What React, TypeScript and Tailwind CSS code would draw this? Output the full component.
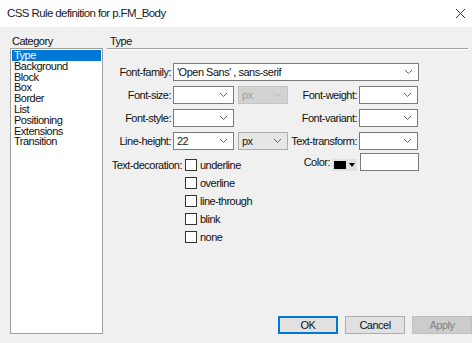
import React from "react";

const font = "font-['Liberation_Sans',Arial,sans-serif]";

function Chevron({ muted }: { muted?: boolean }) {
  return (
    <svg width="9" height="6" viewBox="0 0 9 6" className="shrink-0">
      <path d="M1 1 L4.5 4.5 L8 1" fill="none" stroke={muted ? "#b8b8b8" : "#606060"} strokeWidth="1" />
    </svg>
  );
}

function Select({ w, value, kind = "white" }: { w: string; value?: string; kind?: "white" | "gray" | "disabled" }) {
  const box =
    kind === "disabled"
      ? "bg-[#d2d2d2] border-[#c4c4c4] text-[#a0a0a0]"
      : kind === "gray"
        ? "bg-[#e6e6e6] border-[#adadad] text-[#1a1a1a]"
        : "bg-white border-[#7a7a7a] text-[#1a1a1a]";
  return (
    <div className={`${w} h-[18px] border ${box} flex items-center justify-between pl-[3px] pr-[5px] shrink-0`}>
      <span className="leading-none">{value}</span>
      <Chevron muted={kind === "disabled"} />
    </div>
  );
}

function Check({ label }: { label: string }) {
  return (
    <div className="flex items-center gap-[3px] h-[18px]">
      <div className="w-[12px] h-[12px] border border-[#333333] bg-white" />
      <span className="leading-none">{label}</span>
    </div>
  );
}

export default function App() {
  const cats = ["Type", "Background", "Block", "Box", "Border", "List", "Positioning", "Extensions", "Transition"];

  return (
    <div className={`w-[474px] h-[343px] bg-white overflow-hidden flex flex-col text-[11px] tracking-[-0.5px] text-[#111111] ${font}`}>
      {/* title bar */}
      <div className="h-[27px] flex items-center justify-between pl-[7px] pr-[8px] shrink-0">
        <span className="text-[11.5px] tracking-[-0.6px] text-[#1a1a1a]">CSS Rule definition for p.FM_Body</span>
        <svg width="11" height="11" viewBox="0 0 11 11">
          <path d="M1 1 L10 10 M10 1 L1 10" stroke="#333" strokeWidth="1" />
        </svg>
      </div>

      {/* body */}
      <div className="flex-1 w-[472px] bg-[#f0f0f0] flex pt-[7px] pb-[9px]">
        {/* category column */}
        <div className="w-[104px] pl-[10px] flex flex-col">
          <div className="h-[14px] pl-[2px] leading-[14px]">Category</div>
          <div className="w-[93px] h-[286px] border border-[#a0a0a0] bg-white px-[1px] pt-[1px] flex flex-col">
            {cats.map((c, i) => (
              <div
                key={c}
                className={`h-[10.8px] leading-[11px] pl-[2px] ${i === 0 ? "bg-[#0078d7] text-white" : ""}`}
              >
                {c}
              </div>
            ))}
          </div>
        </div>

        {/* type panel */}
        <div className="flex-1 flex flex-col pl-[3px]">
          <div className="h-[14px] pl-[3px] leading-[14px]">Type</div>
          <div className="h-[2px] mr-[4px] border-t border-[#a0a0a0] border-b border-b-white" />

          <div className="flex flex-col gap-[5px] mt-[13px] pl-[1px]">
            <div className="flex items-center">
              <span className="w-[65px] text-right pr-[2px]">Font-family:</span>
              <div className="w-[246px] h-[18px] border border-[#7a7a7a] bg-white flex items-center justify-between pl-[3px] pr-[5px]">
                <span className="leading-none">'Open Sans' , sans-serif</span>
                <Chevron />
              </div>
            </div>

            <div className="flex items-center">
              <span className="w-[65px] text-right pr-[2px]">Font-size:</span>
              <Select w="w-[61px]" />
              <div className="w-[4px]" />
              <Select w="w-[50px]" value="px" kind="disabled" />
              <span className="w-[71px] text-right pr-[2px]">Font-weight:</span>
              <Select w="w-[59px]" />
            </div>

            <div className="flex items-center">
              <span className="w-[65px] text-right pr-[2px]">Font-style:</span>
              <Select w="w-[61px]" />
              <div className="w-[54px]" />
              <span className="w-[71px] text-right pr-[2px]">Font-variant:</span>
              <Select w="w-[59px]" />
            </div>

            <div className="flex items-center">
              <span className="w-[65px] text-right pr-[2px]">Line-height:</span>
              <Select w="w-[61px]" value="22" />
              <div className="w-[4px]" />
              <Select w="w-[50px]" value="px" kind="gray" />
              <span className="w-[71px] text-right pr-[2px]">Text-transform:</span>
              <Select w="w-[59px]" />
            </div>
          </div>

          <div className="flex mt-[6px] pl-[1px]">
            <span className="w-[77px] text-right pr-[3px] pt-[4px] leading-none">Text-decoration:</span>
            <div className="flex flex-col w-[118px]">
              <Check label="underline" />
              <Check label="overline" />
              <Check label="line-through" />
              <Check label="blink" />
              <Check label="none" />
            </div>
            <div className="flex items-center h-[18px] -mt-[3px]">
              <span className="w-[29px] text-right pr-[2px] leading-none">Color:</span>
              <div className="w-[25px] h-[12px] mt-[5px] bg-[#e1e1e1] flex items-center justify-center gap-[3px]">
                <div className="w-[12px] h-[8px] bg-black" />
                <svg width="6" height="4" viewBox="0 0 6 4">
                  <path d="M0 0 L6 0 L3 4 Z" fill="#000" />
                </svg>
              </div>
              <div className="w-[59px] h-[18px] ml-[3px] border border-[#7a7a7a] bg-white" />
            </div>
          </div>

          {/* buttons */}
          <div className="mt-auto flex justify-end gap-[7px]">
            <div className="w-[60px] h-[18px] border-2 border-[#0078d7] bg-[#e1e1e1] flex items-center justify-center">OK</div>
            <div className="w-[60px] h-[18px] border border-[#adadad] bg-[#e1e1e1] flex items-center justify-center">Cancel</div>
            <div className="w-[60px] h-[18px] border border-[#bfbfbf] bg-[#cccccc] text-[#838383] flex items-center justify-center">Apply</div>
          </div>
        </div>
      </div>
    </div>
  );
}
